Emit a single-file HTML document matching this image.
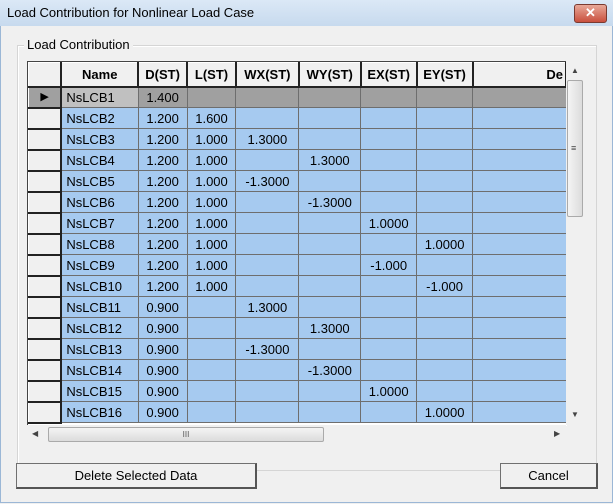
<!DOCTYPE html>
<html><head><style>
body{margin:0;width:613px;height:504px;overflow:hidden;background:#f0f0f0;font-family:"Liberation Sans",sans-serif;position:relative}
.title{position:absolute;left:0;top:0;width:613px;height:26px;background:linear-gradient(#dbe8f6,#c7daee);}
.title span{position:absolute;left:7px;top:5px;font-size:13px;color:#000}
.close{position:absolute;left:574px;top:4px;width:31px;height:17px;border:1px solid #7a3a30;border-radius:3px;background:linear-gradient(#e8a898,#c9503e);color:#fff;font-size:13px;font-weight:bold;text-align:center;line-height:16px}
.frame{position:absolute;left:0;top:26px;width:611px;height:476px;border:1px solid #9bb7d6;border-top:none;background:#f0f0f0}
.grp{position:absolute;left:17px;top:45px;width:578px;height:424px;border:1px solid #d5d5d5;box-shadow:inset 1px 1px 0 #fff}
.grpl{position:absolute;left:24px;top:37px;background:#f0f0f0;padding:0 3px;font-size:13px}
.grid{position:absolute;left:27px;top:61px;width:539px;height:364px;overflow:hidden;background:#fff;border-left:1px solid #444;border-top:1px solid #444}
table{border-collapse:collapse;table-layout:fixed;font-size:13px}
tr{height:21px}
td{height:auto;border:1px solid #6e6e6e;padding:0 0 0 4px;background:#a6caf0;white-space:nowrap;overflow:hidden;line-height:15px}
tr.h{height:24px}
tr.h td{background:#f0f0f0;font-weight:bold;text-align:center;border-right:2px solid #222;border-bottom:2px solid #222;border-top:1px solid #fff;border-left:1px solid #fff;padding:0}
td.i{background:#f0f0f0;border-right:2px solid #222;border-bottom:2px solid #222;border-top:1px solid #fff;border-left:1px solid #fff;padding:0;text-align:center;font-size:11px}
tr.s td{background:#a0a0a0}
tr.s td.n{background:#c0c0c0}
td.c{text-align:center;padding:0}
.vs{position:absolute;left:566px;top:61px;width:17px;height:364px;background:#f0f0f0}
.vth{position:absolute;left:567px;top:80px;width:14px;height:135px;border:1px solid #aaa;border-radius:2px;background:linear-gradient(90deg,#f4f4f4,#dcdcdc)}
.hs{position:absolute;left:27px;top:425px;width:539px;height:17px;background:#f0f0f0}
.hth{position:absolute;left:48px;top:427px;width:274px;height:13px;border:1px solid #aaa;border-radius:2px;background:linear-gradient(#f4f4f4,#dcdcdc);text-align:center;font-size:8px;line-height:13px;color:#555}
.btn{position:absolute;height:26px;border:1px solid #707070;border-right:2px solid #555;border-bottom:2px solid #555;background:#f0f0f0;font-size:13px;text-align:center;line-height:24px;box-sizing:border-box}
.ar{position:absolute;font-size:8px;color:#444}
</style></head><body>
<div class="frame"></div>
<div class="title"><span>Load Contribution for Nonlinear Load Case</span><div class="close">✕</div></div>
<div class="grp"></div><div class="grpl">Load Contribution</div>
<div class="grid"><table>
<colgroup><col style="width:33px"><col style="width:77px"><col style="width:49px"><col style="width:49px"><col style="width:63px"><col style="width:62px"><col style="width:56px"><col style="width:56px"><col style="width:94px"></colgroup>
<tr class="h"><td></td><td>Name</td><td>D(ST)</td><td>L(ST)</td><td>WX(ST)</td><td>WY(ST)</td><td>EX(ST)</td><td>EY(ST)</td><td style="text-align:right;padding-right:2px">De</td></tr>
<tr class="s"><td class="i">▶</td><td class="n">NsLCB1</td><td class="c">1.400</td><td></td><td></td><td></td><td></td><td></td><td></td></tr>
<tr><td class="i"></td><td>NsLCB2</td><td class="c">1.200</td><td class="c">1.600</td><td></td><td></td><td></td><td></td><td></td></tr>
<tr><td class="i"></td><td>NsLCB3</td><td class="c">1.200</td><td class="c">1.000</td><td class="c">1.3000</td><td></td><td></td><td></td><td></td></tr>
<tr><td class="i"></td><td>NsLCB4</td><td class="c">1.200</td><td class="c">1.000</td><td></td><td class="c">1.3000</td><td></td><td></td><td></td></tr>
<tr><td class="i"></td><td>NsLCB5</td><td class="c">1.200</td><td class="c">1.000</td><td class="c">-1.3000</td><td></td><td></td><td></td><td></td></tr>
<tr><td class="i"></td><td>NsLCB6</td><td class="c">1.200</td><td class="c">1.000</td><td></td><td class="c">-1.3000</td><td></td><td></td><td></td></tr>
<tr><td class="i"></td><td>NsLCB7</td><td class="c">1.200</td><td class="c">1.000</td><td></td><td></td><td class="c">1.0000</td><td></td><td></td></tr>
<tr><td class="i"></td><td>NsLCB8</td><td class="c">1.200</td><td class="c">1.000</td><td></td><td></td><td></td><td class="c">1.0000</td><td></td></tr>
<tr><td class="i"></td><td>NsLCB9</td><td class="c">1.200</td><td class="c">1.000</td><td></td><td></td><td class="c">-1.000</td><td></td><td></td></tr>
<tr><td class="i"></td><td>NsLCB10</td><td class="c">1.200</td><td class="c">1.000</td><td></td><td></td><td></td><td class="c">-1.000</td><td></td></tr>
<tr><td class="i"></td><td>NsLCB11</td><td class="c">0.900</td><td></td><td class="c">1.3000</td><td></td><td></td><td></td><td></td></tr>
<tr><td class="i"></td><td>NsLCB12</td><td class="c">0.900</td><td></td><td></td><td class="c">1.3000</td><td></td><td></td><td></td></tr>
<tr><td class="i"></td><td>NsLCB13</td><td class="c">0.900</td><td></td><td class="c">-1.3000</td><td></td><td></td><td></td><td></td></tr>
<tr><td class="i"></td><td>NsLCB14</td><td class="c">0.900</td><td></td><td></td><td class="c">-1.3000</td><td></td><td></td><td></td></tr>
<tr><td class="i"></td><td>NsLCB15</td><td class="c">0.900</td><td></td><td></td><td></td><td class="c">1.0000</td><td></td><td></td></tr>
<tr><td class="i"></td><td>NsLCB16</td><td class="c">0.900</td><td></td><td></td><td></td><td></td><td class="c">1.0000</td><td></td></tr>
</table></div>
<div class="vs"></div><div class="vth"></div>
<div class="ar" style="left:571px;top:66px">▲</div><div class="ar" style="left:571px;top:410px">▼</div>
<div class="ar" style="left:571px;top:143px;font-size:9px">≡</div>
<div class="hs"></div><div class="hth">III</div>
<div class="ar" style="left:32px;top:429px">◀</div><div class="ar" style="left:554px;top:429px">▶</div>
<div class="btn" style="left:16px;top:463px;width:241px">Delete Selected Data</div>
<div class="btn" style="left:500px;top:463px;width:98px">Cancel</div>
</body></html>
